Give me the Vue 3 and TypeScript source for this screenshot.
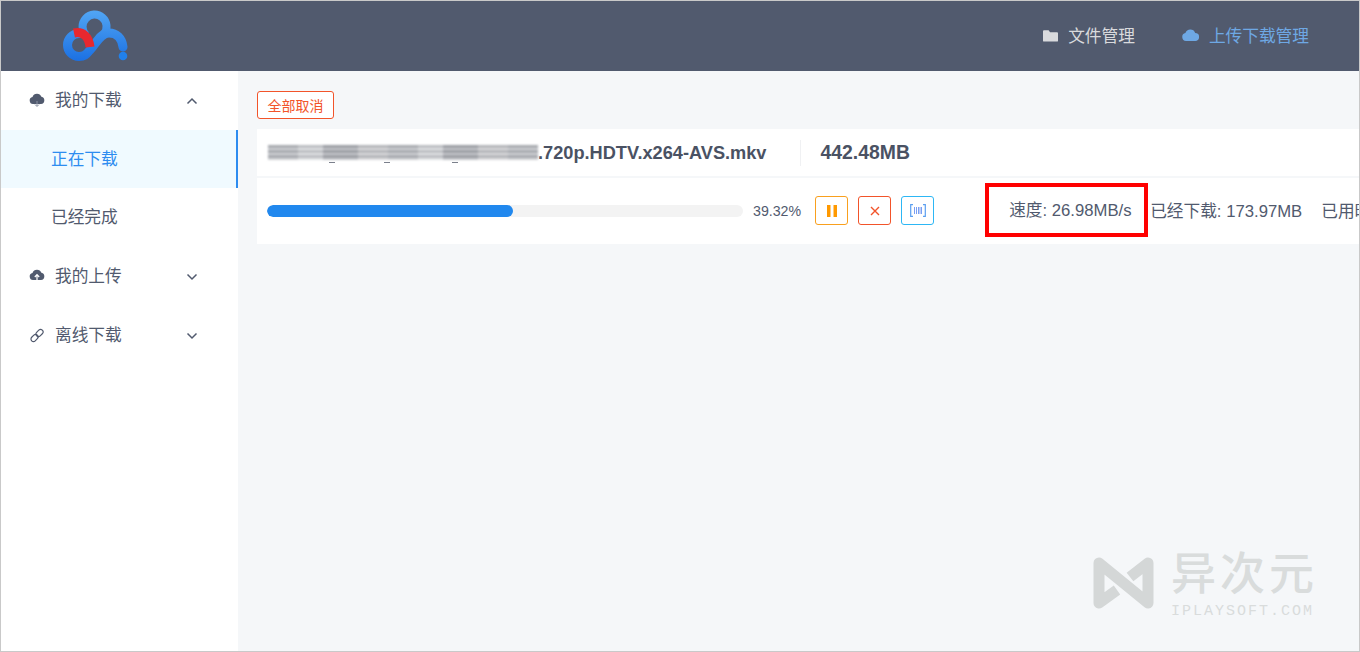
<script setup lang="ts">
interface MenuGroup {
  label: string
  icon: 'down' | 'up' | 'link'
  open: boolean
  children: { label: string; active: boolean }[]
}

const menu: MenuGroup[] = [
  {
    label: '我的下载',
    icon: 'down',
    open: true,
    children: [
      { label: '正在下载', active: true },
      { label: '已经完成', active: false },
    ],
  },
  { label: '我的上传', icon: 'up', open: false, children: [] },
  { label: '离线下载', icon: 'link', open: false, children: [] },
]

const percent = 39.32
// the bar in the shot is drawn longer than the label says
const barWidth = 51.7
</script>

<template>
  <div class="page">
    <header class="topbar">
      <svg class="logo" viewBox="60 8 70 55" width="70" height="55">
        <defs>
          <linearGradient id="logoBlue" gradientUnits="userSpaceOnUse" x1="0" y1="10" x2="0" y2="62">
            <stop offset="0" stop-color="#52a6f4" />
            <stop offset="1" stop-color="#1a6fe2" />
          </linearGradient>
        </defs>
        <path d="M86 35A12 12 0 1 1 104 34" fill="none" stroke="url(#logoBlue)" stroke-width="8" />
        <path d="M123 47C122 38 116 33 109 33C100 33 96 44 90 50C86 55 84 56.5 79 56.5A11.5 11.5 0 0 1 79 33.5"
          fill="none" stroke="url(#logoBlue)" stroke-width="9" stroke-linecap="round" />
        <path d="M74 33C83 31 89 37 90 47" fill="none" stroke="#e8282e" stroke-width="9" />
        <circle cx="123" cy="56" r="4.3" fill="#2180ea" />
      </svg>
      <nav class="topnav">
        <a class="topnav-item">
          <svg width="15" height="13" viewBox="0 0 16 13"><path d="M0 2a1 1 0 0 1 1-1h5l1.5 2H15a1 1 0 0 1 1 1v8a1 1 0 0 1-1 1H1a1 1 0 0 1-1-1z" fill="#d9dadd" /></svg>
          <span>文件管理</span>
        </a>
        <a class="topnav-item current">
          <svg width="17" height="12" viewBox="0 0 17 12"><path d="M4 12a4 4 0 0 1-.6-7.9A5.2 5.2 0 0 1 13.2 4 4 4 0 0 1 13 12z" fill="#6ea8e4" /></svg>
          <span>上传下载管理</span>
        </a>
      </nav>
    </header>

    <div class="body">
      <aside class="sider">
        <template v-for="group in menu" :key="group.label">
          <div class="group-title">
            <svg v-if="group.icon !== 'link'" class="group-icon" width="16" height="15" viewBox="0 0 16 15">
              <path d="M4 11a3.6 3.6 0 0 1-.5-7.1A4.8 4.8 0 0 1 12.4 3.7 3.7 3.7 0 0 1 12 11z" fill="#515a6e" />
              <path v-if="group.icon === 'down'" d="M8 8v5M6 11.5l2 2 2-2" fill="none" stroke="#8c93a3" stroke-width="1" />
              <path v-else d="M8 13V6M5.8 8L8 5.6 10.2 8" fill="none" stroke="#fff" stroke-width="1.2" />
            </svg>
            <svg v-else class="group-icon" width="16" height="15" viewBox="0 0 16 15">
              <g fill="none" stroke="#515a6e" stroke-width="1.2" transform="rotate(-45 8 7.5)">
                <rect x="0.5" y="5" width="8" height="5" rx="2.5" />
                <rect x="7.5" y="5" width="8" height="5" rx="2.5" />
              </g>
            </svg>
            <span class="group-label">{{ group.label }}</span>
            <svg class="chevron" width="12" height="8" viewBox="0 0 12 8">
              <path :d="group.open ? 'M1.5 6.5L6 2l4.5 4.5' : 'M1.5 1.5L6 6l4.5-4.500'" fill="none" stroke="#515a6e" stroke-width="1.5" />
            </svg>
          </div>
          <div v-for="child in group.children" :key="child.label" class="menu-item" :class="{ active: child.active }">
            {{ child.label }}
          </div>
        </template>
      </aside>

      <main class="content">
        <button class="cancel-all">全部取消</button>

        <section class="file-head">
          <span class="smudge"></span>
          <span class="ticks"></span>
          <span class="file-name">.720p.HDTV.x264-AVS.mkv</span>
          <span class="file-size">442.48MB</span>
        </section>

        <section class="file-progress">
          <div class="track">
            <div class="fill" :style="{ width: barWidth + '%' }"></div>
          </div>
          <span class="percent">{{ percent }}%</span>
          <button class="act warn">
            <svg width="10" height="12" viewBox="0 0 10 12"><path d="M0 0h3.5v12H0zM6.5 0H10v12H6.5z" fill="#f90" /></svg>
          </button>
          <button class="act danger">
            <svg width="10" height="10" viewBox="0 0 10 10"><path d="M1 1l8 8M9 1l-8 8" stroke="#f2542a" stroke-width="1.4" /></svg>
          </button>
          <button class="act info">
            <svg width="16" height="13" viewBox="0 0 16 13">
              <path d="M3 .7H.7v11.6H3M13 .7h2.3v11.6H13" fill="none" stroke="#5b9ff0" stroke-width="1.2" />
              <path d="M4 3h1v7H4zM6 3h1v7H6zM8 3h1.500v7H8zM10.500 3h1.500v7h-1.500z" fill="#7a9ff2" />
            </svg>
          </button>
          <div class="speed-box">速度: 26.98MB/s</div>
          <span class="stat done">已经下载: 173.97MB</span>
          <span class="stat used">已用时: 00:00:06</span>
        </section>

        <div class="watermark">
          <svg width="64" height="54" viewBox="1090 556 64 54">
            <path d="M1116 590L1098 603V563L1147 603V563L1129 577" fill="none" stroke="#d4d7d7" stroke-width="11" stroke-linejoin="round" />
          </svg>
          <div class="wm-text">
            <div class="wm-cn">异次元</div>
            <div class="wm-en">IPLAYSOFT.COM</div>
          </div>
        </div>
      </main>
    </div>
  </div>
</template>

<style>
html,
body {
  margin: 0;
  height: 100%;
  overflow: hidden;
}
</style>

<style scoped>
.page {
  box-sizing: border-box;
  width: 1360px;
  height: 652px;
  border: 1px solid #c9c9c9;
  display: flex;
  flex-direction: column;
  overflow: hidden;
  font-family: "Liberation Sans", "Noto Sans CJK SC", sans-serif;
  font-size: 16.7px;
  color: #515a6e;
}

.topbar {
  flex: none;
  height: 70px;
  background: #515a6e;
  display: flex;
  align-items: flex-start;
  justify-content: space-between;
  padding-right: 50px;
}

.logo {
  display: block;
  margin: 7px 0 0 59px;
}

.topnav {
  display: flex;
  gap: 47px;
  height: 68px;
  align-items: center;
}

.topnav-item {
  display: flex;
  align-items: center;
  gap: 10px;
  color: #d9dadd;
}

.topnav-item.current {
  color: #6ea8e4;
}

.body {
  flex: 1;
  display: flex;
  min-height: 0;
}

.sider {
  flex: none;
  width: 237px;
  background: #fff;
}

.group-title {
  box-sizing: border-box;
  height: 58.7px;
  display: flex;
  align-items: center;
  padding: 1px 40px 0 28px;
}

.group-title span {
  line-height: 24px;
}

.group-icon {
  flex: none;
}

.group-label {
  margin-left: 10px;
  flex: 1;
}

.menu-item {
  box-sizing: border-box;
  height: 58.7px;
  line-height: 60px;
  padding-left: 50px;
}

.menu-item.active {
  color: #2d8cf0;
  background: #f0faff;
  border-right: 2.5px solid #2d8cf0;
}

.content {
  position: relative;
  flex: 1;
  min-width: 0;
  background: #f5f7f9;
  padding: 20px 0 0 19px;
  overflow: hidden;
}

.cancel-all {
  display: block;
  box-sizing: border-box;
  width: 77px;
  height: 28px;
  padding: 0;
  background: #fff;
  border: 1px solid #f2542a;
  border-radius: 3px;
  color: #f2542a;
  font: inherit;
  font-size: 14px;
}

.file-head {
  position: relative;
  margin-top: 10px;
  height: 47px;
  background: #fff;
  display: flex;
  align-items: center;
  padding-left: 11px;
  white-space: nowrap;
  font-weight: 700;
  color: #4a5263;
}

.smudge {
  flex: none;
  width: 270px;
  height: 15px;
  background:
    repeating-linear-gradient(0deg, rgba(255, 255, 255, 0.35) 0 2px, rgba(120, 123, 130, 0.25) 2px 5px),
    repeating-linear-gradient(90deg, #b9bbc0 0 30px, #d3d5d8 30px 55px, #a9abb1 55px 90px, #c9cacd 90px 120px);
  filter: blur(1px);
}

.ticks {
  position: absolute;
  left: 72px;
  top: 33px;
  width: 6px;
  height: 1px;
  background: #7b808c;
  box-shadow: 55px 0 #7b808c, 123px 0 #7b808c;
}

.file-name {
  font-size: 18.2px;
  padding-right: 34px;
  border-right: 1px solid #f0f1f3;
  line-height: 26px;
}

.file-size {
  margin-left: 19px;
  font-size: 19.4px;
}

.file-progress {
  margin-top: 2px;
  height: 66px;
  background: #fff;
  display: flex;
  align-items: center;
  padding-left: 10px;
  white-space: nowrap;
}

.track {
  flex: none;
  width: 476px;
  height: 12px;
  border-radius: 6px;
  background: #f3f3f3;
  overflow: hidden;
}

.fill {
  height: 100%;
  border-radius: 6px;
  background: #2188ee;
}

.percent {
  margin: 0 14px 0 10px;
  font-size: 14.2px;
}

.act {
  box-sizing: border-box;
  flex: none;
  width: 33px;
  height: 29px;
  margin: -1px 10px 0 0;
  padding: 0;
  display: flex;
  align-items: center;
  justify-content: center;
  background: #fff;
  border: 1px solid;
  border-radius: 3px;
}

.warn {
  border-color: #f9a01e;
}

.danger {
  border-color: #f2542a;
}

.info {
  border-color: #2db7f5;
}

.speed-box {
  box-sizing: border-box;
  flex: none;
  width: 163px;
  height: 54px;
  margin: -2px 0 0 41px;
  padding-left: 20px;
  line-height: 48px;
  border: 4px solid #f00;
}

.stat {
  margin-top: -2px;
}

.stat.done {
  margin-left: 2px;
}

.stat.used {
  margin-left: 19px;
}

.watermark {
  position: absolute;
  left: 853px;
  top: 485px;
  display: flex;
  gap: 16px;
}

.wm-text {
  margin-top: -8px;
  color: #d9dcdc;
}

.wm-cn {
  font-size: 45px;
  font-weight: 500;
  letter-spacing: 4px;
  line-height: 54px;
}

.wm-en {
  margin-top: 2px;
  font-family: "Liberation Mono", monospace;
  font-size: 15px;
  letter-spacing: 2px;
  line-height: 16px;
}
</style>
